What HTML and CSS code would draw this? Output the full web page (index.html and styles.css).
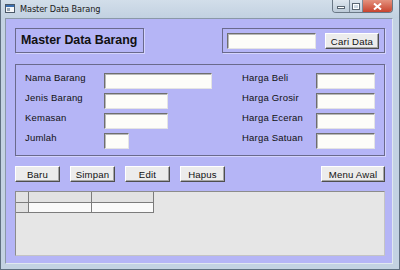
FILE: index.html
```html
<!DOCTYPE html>
<html lang="id">
<head>
  <meta charset="UTF-8"/>
  <title>Master Data Barang</title>
  <link rel="stylesheet" href="styles.css">
</head>
<body>
  <div class="window">
    <div class="titlebar">
      <svg class="app-icon" width="10" height="10" viewBox="0 0 10 10">
        <rect x="0.5" y="1.5" width="9" height="8" fill="#f4f6f8" stroke="#4a5868"/>
        <rect x="1" y="2" width="8" height="2" fill="#3a6fb0"/>
        <rect x="2" y="5" width="3" height="3" fill="#9aa8b6"/>
      </svg>
      <span class="caption">Master Data Barang</span>
      <div class="spacer"></div>
      <div class="controls">
        <div class="ctl min"><svg width="8" height="6" viewBox="0 0 8 6"><rect x="0.5" y="3.5" width="7" height="2" fill="#fff" stroke="#5a6672"/></svg></div>
        <div class="ctl max"><svg width="8" height="7" viewBox="0 0 8 7"><rect x="0.5" y="0.5" width="7" height="6" fill="none" stroke="#5a6672"/><rect x="1.5" y="1.5" width="5" height="4" fill="none" stroke="#fff"/></svg></div>
        <div class="ctl close"><svg width="9" height="7" viewBox="0 0 9 7"><path d="M1 0.5 L8 6.5 M8 0.5 L1 6.5" stroke="#fff" stroke-width="2"/></svg></div>
      </div>
    </div>
    <div class="frame">
      <div class="client">
        <div class="top-row">
          <div class="title-box">Master Data Barang</div>
          <div class="search-box">
            <div class="input search-input"></div>
            <button class="btn cari">Cari Data</button>
          </div>
        </div>

        <div class="form-group">
          <label>Nama Barang</label><div class="cell"><div class="input w-nama"></div></div>
          <label>Harga Beli</label><div class="cell"><div class="input w-harga"></div></div>
          <label>Jenis Barang</label><div class="cell"><div class="input w-mid"></div></div>
          <label>Harga Grosir</label><div class="cell"><div class="input w-harga"></div></div>
          <label>Kemasan</label><div class="cell"><div class="input w-mid"></div></div>
          <label>Harga Eceran</label><div class="cell"><div class="input w-harga"></div></div>
          <label>Jumlah</label><div class="cell"><div class="input w-jumlah"></div></div>
          <label>Harga Satuan</label><div class="cell"><div class="input w-harga"></div></div>
        </div>

        <div class="buttons">
          <button class="btn">Baru</button>
          <button class="btn">Simpan</button>
          <button class="btn">Edit</button>
          <button class="btn">Hapus</button>
          <div class="spacer"></div>
          <button class="btn menu">Menu Awal</button>
        </div>

        <div class="grid">
          <table>
            <tr class="head"><td class="rh"></td><td class="c1"></td><td class="c2"></td></tr>
            <tr class="data"><td class="rh"></td><td class="c1"></td><td class="c2"></td></tr>
          </table>
        </div>
      </div>
    </div>
  </div>
</body>
</html>
```

FILE: styles.css
```css
*{box-sizing:border-box;margin:0;padding:0}
body{width:400px;height:270px;overflow:hidden;background:#fff;font-family:'Liberation Sans',Arial,sans-serif;color:#111}
.window{width:400px;height:270px;display:flex;flex-direction:column;background:#c3d2e2;border:1px solid #5f6f80;border-top:none}
.titlebar{height:18px;display:flex;align-items:flex-start;background:linear-gradient(to bottom,#d2deea,#c2d1e1);padding-left:4px}
.app-icon{margin-top:3px}
.caption{font-size:8.2px;color:#1a1a1a;margin-left:5px;margin-top:4px;font-family:'DejaVu Sans','Liberation Sans',sans-serif;letter-spacing:-0.1px}
.spacer{flex:1}
.controls{display:flex;height:13px;margin-right:6px;border:1px solid #6a7886;border-top:none;border-radius:0 0 4px 4px;overflow:hidden}
.ctl{display:flex;align-items:center;justify-content:center;background:linear-gradient(to bottom,#dfe7ef,#bccad8)}
.ctl.min{width:17px;border-right:1px solid #7c8a98}
.ctl.max{width:13px;border-right:1px solid #7c8a98}
.ctl.close{width:29px;background:linear-gradient(to bottom,#e4927e,#c8442e)}
.frame{flex:1;display:flex;padding:0 6px 5px 4px}
.client{flex:1;display:flex;flex-direction:column;background:#b5b5f6;border:1px solid #8a98a8;border-bottom-color:#e0e8f0;border-right-color:#e0e8f0;padding:9px 7px 7px 9px}
.top-row{display:flex;justify-content:space-between;height:26px}
.title-box{width:129px;height:25px;border:1px solid #6a6a8c;box-shadow:1px 1px 0 #d4d4fc;font-size:12.4px;font-weight:bold;padding:4px 0 0 5px}
.search-box{width:163px;height:25px;border:1px solid #6a6a8c;box-shadow:1px 1px 0 #d4d4fc;display:flex;align-items:flex-start;padding:4px 0 0 4px}
.input{height:16px;background:#fdfdf9;border:1px solid;border-color:#6e6e6e #e4e4e4 #e4e4e4 #6e6e6e;box-shadow:inset 1px 1px 0 #b8b8b8}
.search-input{width:89px}
.btn{height:16px;background:#ececec;border:1px solid;border-color:#fff #4e4e4e #4e4e4e #fff;box-shadow:inset -1px -1px 0 #a6a6a6;font-family:'Liberation Sans',Arial,sans-serif;font-size:9.6px;color:#111;width:45px;letter-spacing:0.2px}
.btn.cari{width:54px;margin-left:9px}
.btn.menu{width:64px}
.form-group{margin-top:10px;height:92px;border:1px solid #6a6a8c;box-shadow:1px 1px 0 #d4d4fc;padding:8px 9px 6px 9px;display:grid;grid-template-columns:79px 138px 74px 59px;grid-auto-rows:16px;row-gap:4px}
.form-group label{font-size:9.5px;line-height:10px;padding-top:0;letter-spacing:0.2px}
.cell{display:flex}
.w-nama{width:108px}
.w-mid{width:64px}
.w-jumlah{width:25px}
.w-harga{width:59px}
.buttons{margin-top:10px;display:flex;gap:10px;height:16px}
.buttons .spacer{flex:1}
.grid{margin-top:9px;flex:1;background:#e6e6e6;border:1px solid #8c8c8c;border-right-color:#c4c4c4;border-bottom-color:#c4c4c4}
.grid table{border-collapse:collapse}
.grid td{height:10px;border:1px solid #7c7c7c;border-top:none;border-left:none;padding:0}
.grid tr.head td{background:#e2e2e2}
.grid tr.data td{background:#fafafa}
.grid tr.data td.rh{background:#e2e2e2}
.grid td.rh{width:12px}
.grid td.c1{width:63px}
.grid td.c2{width:62px}
```
